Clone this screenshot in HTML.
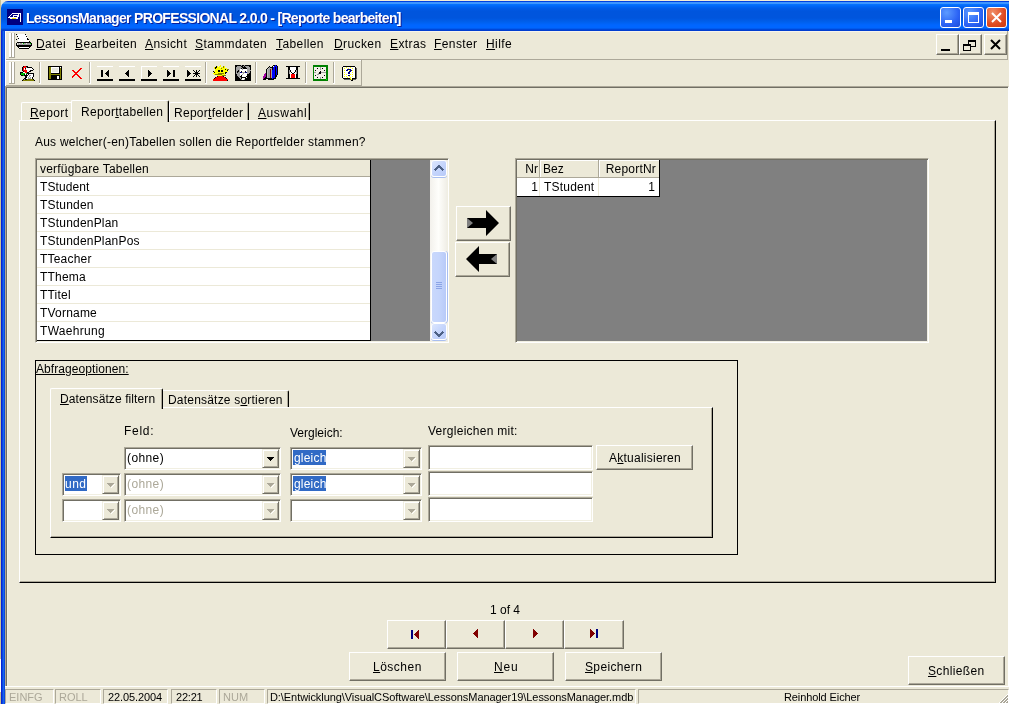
<!DOCTYPE html>
<html><head><meta charset="utf-8">
<style>
*{margin:0;padding:0;box-sizing:border-box}
html,body{width:1009px;height:704px;overflow:hidden;background:#ECE9D8;font-family:"Liberation Sans",sans-serif;font-size:12px;color:#000}
.a{position:absolute}
.t{position:absolute;white-space:pre;line-height:14px}
u{text-decoration:underline;text-underline-offset:1px;text-decoration-thickness:1px}
.btn{position:absolute;background:#ECE9D8;border-top:1px solid #fff;border-left:1px solid #fff;border-right:1px solid #716F64;border-bottom:1px solid #716F64;box-shadow:inset -1px -1px 0 #ACA899}
.sunk{position:absolute;background:#fff;border-top:1px solid #ACA899;border-left:1px solid #ACA899;border-right:1px solid #fff;border-bottom:1px solid #fff;box-shadow:inset 1px 1px 0 #716F64,inset -1px -1px 0 #F1EFE2}
.panel{position:absolute;border-top:1px solid #ACA899;border-left:1px solid #ACA899;border-right:1px solid #fff;border-bottom:1px solid #fff}
</style></head><body>
<div id="root" class="a" style="left:0;top:0;width:1009px;height:704px;overflow:hidden;will-change:transform">

<!-- desktop strip -->
<div class="a" style="left:0;top:0;width:1009px;height:1px;background:#F3EDD6"></div>
<div class="a" style="left:0;top:0;width:1px;height:704px;background:#C8C098"></div><div class="a" style="left:0;top:659px;width:1px;height:33px;background:#fff"></div>

<!-- window frame left blue -->
<div class="a" style="left:1px;top:30px;width:4px;height:674px;background:linear-gradient(90deg,#0019CF,#0831D9 25%,#166AEE 60%,#0836D9)"></div>

<!-- title bar -->
<div class="a" style="left:1px;top:1px;width:1008px;height:30px;border-radius:7px 0 0 0;background:linear-gradient(180deg,#0040E0 0,#0040E0 1px,#3D95FF 1px,#3D95FF 3px,#0875FF 3px,#0068F8 5px,#005CEB 7px,#0055DD 10px,#0055DD 17px,#0060EC 21px,#0066FF 24px,#0066FF 27px,#0052E0 28px,#003DD0 29px,#003DD0 30px)"></div>
<!-- app icon -->
<div id="t1" class="t" style="left:26px;top:11px;font-weight:bold;font-size:14px;letter-spacing:-0.68px;color:#fff;text-shadow:1px 1px 0 #0A1E99">LessonsManager PROFESSIONAL 2.0.0 - [Reporte bearbeiten]</div>

<!-- title buttons -->
<div class="a" style="left:940px;top:7px;width:21px;height:21px;border:1px solid #fff;border-radius:3px;background:radial-gradient(circle at 30% 25%,#5C9BFF,#2B63F5 60%,#1C4DD8)"></div>
<div class="a" style="left:945px;top:20px;width:7px;height:3px;background:#fff"></div>
<div class="a" style="left:963px;top:7px;width:21px;height:21px;border:1px solid #fff;border-radius:3px;background:radial-gradient(circle at 30% 25%,#5C9BFF,#2B63F5 60%,#1C4DD8)"></div>
<div class="a" style="left:968px;top:12px;width:11px;height:11px;border:1px solid #fff;border-top-width:3px"></div>
<div class="a" style="left:986px;top:7px;width:21px;height:21px;border:1px solid #fff;border-radius:3px;background:radial-gradient(circle at 30% 25%,#F0906A,#E04A20 60%,#C83A10)"></div>
<svg class="a" style="left:986px;top:7px" width="21" height="21"><path d="M6 6 L15 15 M15 6 L6 15" stroke="#fff" stroke-width="2"/></svg>

<!-- menubar -->
<div class="a" style="left:5px;top:31px;width:1004px;height:1px;background:#F6F4EC"></div>
<div class="a" style="left:9px;top:33px;width:2px;height:25px;background:#fff"></div>
<div class="a" style="left:11px;top:33px;width:1px;height:25px;background:#ACA899"></div>
<div class="a" style="left:12px;top:33px;width:2px;height:25px;background:#fff"></div>
<div class="a" style="left:14px;top:33px;width:1px;height:25px;background:#ACA899"></div><div class="a" style="left:9px;top:57px;width:6px;height:1px;background:#ACA899"></div>
<div id="t2" class="t" style="left:36px;top:37px;letter-spacing:0.4px"><u>D</u>atei</div><div id="t3" class="t" style="left:75px;top:37px;letter-spacing:0.4px"><u>B</u>earbeiten</div><div id="t4" class="t" style="left:145px;top:37px;letter-spacing:0.4px"><u>A</u>nsicht</div><div id="t5" class="t" style="left:195px;top:37px;letter-spacing:0.4px"><u>S</u>tammdaten</div><div id="t6" class="t" style="left:276px;top:37px;letter-spacing:0.4px"><u>T</u>abellen</div><div id="t7" class="t" style="left:334px;top:37px;letter-spacing:0.4px"><u>D</u>rucken</div><div id="t8" class="t" style="left:390px;top:37px;letter-spacing:0.4px"><u>E</u>xtras</div><div id="t9" class="t" style="left:434px;top:37px;letter-spacing:0.4px"><u>F</u>enster</div><div id="t10" class="t" style="left:486px;top:37px;letter-spacing:0.4px"><u>H</u>ilfe</div>
<div class="a" style="left:5px;top:59px;width:1003px;height:1px;background:#ACA899"></div><div class="a" style="left:1007px;top:31px;width:1px;height:29px;background:#ACA899"></div>
<div class="a" style="left:5px;top:60px;width:356px;height:1px;background:#fff"></div><div class="a" style="left:361px;top:60px;width:1px;height:26px;background:#ACA899"></div>

<!-- mdi buttons -->
<div class="btn" style="left:936px;top:34px;width:23px;height:21px"></div>
<div class="btn" style="left:959px;top:34px;width:23px;height:21px"></div>
<div class="btn" style="left:984px;top:34px;width:23px;height:21px"></div>
<div class="a" style="left:941px;top:49px;width:9px;height:2px;background:#000"></div>
<div class="a" style="left:968px;top:40px;width:8px;height:7px;border:1px solid #000;border-top-width:2px"></div>
<div class="a" style="left:963px;top:44px;width:8px;height:7px;border:1px solid #000;border-top-width:2px;background:#ECE9D8"></div>
<svg class="a" style="left:990px;top:39px" width="11" height="11"><path d="M1 1 L10 10 M10 1 L1 10" stroke="#000" stroke-width="2"/></svg>


<!-- toolbar -->
<div class="a" style="left:9px;top:62px;width:2px;height:22px;background:#fff"></div>
<div class="a" style="left:11px;top:62px;width:1px;height:22px;background:#ACA899"></div>
<div class="a" style="left:12px;top:62px;width:2px;height:22px;background:#fff"></div>
<div class="a" style="left:14px;top:62px;width:1px;height:22px;background:#ACA899"></div><div class="a" style="left:9px;top:83px;width:6px;height:1px;background:#ACA899"></div>
<div class="a" style="left:5px;top:85px;width:357px;height:1px;background:#ACA899"></div>

<!-- MDI client -->
<div class="a" style="left:5px;top:86px;width:1004px;height:600px;border-top:1px solid #ACA899;border-left:1px solid #B0A890;border-right:1px solid #fff;box-shadow:inset 1px 1px 0 #716F64,inset 2px 0 0 #F4F0E2"></div>
<div class="a" style="left:5px;top:31px;width:1px;height:55px;background:#fff"></div>
<div class="a" style="left:5px;top:686px;width:1004px;height:1px;background:#fff"></div>

<!-- tab panel -->
<div class="a" style="left:19px;top:120px;width:977px;height:463px;border-top:1px solid #fff;border-left:1px solid #fff;border-right:1px solid #000;border-bottom:1px solid #000;box-shadow:inset -1px -1px 0 #ACA899"></div>


<!-- main tabs -->
<div class="a" style="left:21px;top:102px;width:50px;height:18px;background:#ECE9D8;border-top:1px solid #fff;border-left:1px solid #fff;border-top-left-radius:2px"></div>
<div class="a" style="left:169px;top:102px;width:80px;height:18px;background:#ECE9D8;border-top:1px solid #fff;border-left:1px solid #fff;border-right:1px solid #000;box-shadow:inset -1px 0 0 #ACA899;border-top-left-radius:2px;border-top-right-radius:2px"></div>
<div class="a" style="left:249px;top:102px;width:61px;height:18px;background:#ECE9D8;border-top:1px solid #fff;border-right:1px solid #000;box-shadow:inset -1px 0 0 #ACA899;border-top-right-radius:2px"></div>
<div class="a" style="left:71px;top:100px;width:98px;height:22px;background:#ECE9D8;border-top:1px solid #fff;border-left:1px solid #fff;border-right:1px solid #000;box-shadow:inset -1px 0 0 #ACA899;border-top-left-radius:2px;border-top-right-radius:2px;z-index:2"></div>
<div id="t11" class="t" style="left:30px;top:106px;letter-spacing:0.4px"><u>R</u>eport</div>
<div id="t12" class="t" style="left:81px;top:105px;z-index:3;letter-spacing:0.3px">Repor<u>t</u>tabellen</div>
<div id="t13" class="t" style="left:174px;top:106px;letter-spacing:0.27px">Repor<u>t</u>felder</div>
<div id="t14" class="t" style="left:258px;top:106px;letter-spacing:0.54px"><u>A</u>uswahl</div>

<div id="t15" class="t" style="left:35px;top:135px;letter-spacing:0.22px">Aus welcher(-en)Tabellen sollen die Reportfelder stammen?</div>

<!-- left grid -->
<div class="a" style="left:35px;top:158px;width:414px;height:185px;background:#808080;border-top:1px solid #ACA899;border-left:1px solid #ACA899;border-right:1px solid #fff;border-bottom:1px solid #fff;box-shadow:inset 1px 1px 0 #716F64,inset -1px -1px 0 #F1EFE2"></div>
<div class="a" style="left:37px;top:160px;width:334px;height:181px;background:#fff;border-right:1px solid #000;border-bottom:1px solid #000"></div>
<div class="a" style="left:37px;top:160px;width:333px;height:17px;background:#ECE9D8;border-bottom:1px solid #ACA899"></div>
<div id="t16" class="t" style="left:40px;top:162px;letter-spacing:0.2px">verfügbare Tabellen</div>
<div class="a" style="left:37px;top:195px;width:333px;height:1px;background:#ECE9D8"></div>
<div id="t17" class="t" style="left:40px;top:180px;letter-spacing:0.1px">TStudent</div>
<div class="a" style="left:37px;top:213px;width:333px;height:1px;background:#ECE9D8"></div>
<div id="t18" class="t" style="left:40px;top:198px;letter-spacing:0.2px">TStunden</div>
<div class="a" style="left:37px;top:231px;width:333px;height:1px;background:#ECE9D8"></div>
<div id="t19" class="t" style="left:40px;top:216px;letter-spacing:0.2px">TStundenPlan</div>
<div class="a" style="left:37px;top:249px;width:333px;height:1px;background:#ECE9D8"></div>
<div id="t20" class="t" style="left:40px;top:234px;letter-spacing:0.2px">TStundenPlanPos</div>
<div class="a" style="left:37px;top:267px;width:333px;height:1px;background:#ECE9D8"></div>
<div id="t21" class="t" style="left:40px;top:252px;letter-spacing:0.2px">TTeacher</div>
<div class="a" style="left:37px;top:285px;width:333px;height:1px;background:#ECE9D8"></div>
<div id="t22" class="t" style="left:40px;top:270px;letter-spacing:0.2px">TThema</div>
<div class="a" style="left:37px;top:303px;width:333px;height:1px;background:#ECE9D8"></div>
<div id="t23" class="t" style="left:40px;top:288px;letter-spacing:0.2px">TTitel</div>
<div class="a" style="left:37px;top:321px;width:333px;height:1px;background:#ECE9D8"></div>
<div id="t24" class="t" style="left:40px;top:306px;letter-spacing:0.2px">TVorname</div>
<div id="t25" class="t" style="left:40px;top:324px;letter-spacing:0.3px">TWaehrung</div>


<!-- scrollbar -->
<div class="a" style="left:430px;top:160px;width:17px;height:181px;background:linear-gradient(90deg,#F3F1EC,#FEFEFB 50%,#F0EEE6)"></div>
<div class="a" style="left:431px;top:160px;width:16px;height:17px;border:1px solid #fff;border-radius:3px;background:linear-gradient(135deg,#DCE6FD,#C5D5FC 50%,#B8CAF8);box-shadow:0 1px 0 #A8BEF0"></div>
<svg class="a" style="left:434px;top:165px" width="10" height="6" shape-rendering="crispEdges"><path fill="#4D6185" d="M4 0h2v1h-2zM3 1h4v1h-4zM2 2h6v1h-6zM1 3h3v1h-3zM6 3h3v1h-3zM0 4h3v1h-3zM7 4h3v1h-3zM1 5h1v1h-1zM8 5h1v1h-1z"/></svg>
<div class="a" style="left:431px;top:251px;width:16px;height:72px;border:1px solid #fff;border-radius:3px;background:linear-gradient(90deg,#C9D8FC,#C5D5FC 50%,#B8CAF8);box-shadow:0 1px 0 #A8BEF0,1px 0 0 #A8BEF0"></div>
<div class="a" style="left:436px;top:282px;width:6px;height:1px;background:#8BA4E6;box-shadow:0 2px 0 #8BA4E6,0 4px 0 #8BA4E6,0 6px 0 #8BA4E6"></div>
<div class="a" style="left:431px;top:323px;width:16px;height:17px;border:1px solid #fff;border-radius:3px;background:linear-gradient(135deg,#DCE6FD,#C5D5FC 50%,#B8CAF8);box-shadow:0 1px 0 #A8BEF0"></div>
<svg class="a" style="left:434px;top:331px" width="10" height="6" shape-rendering="crispEdges"><path fill="#4D6185" d="M1 0h1v1h-1zM8 0h1v1h-1zM0 1h3v1h-3zM7 1h3v1h-3zM1 2h3v1h-3zM6 2h3v1h-3zM2 3h6v1h-6zM3 4h4v1h-4zM4 5h2v1h-2z"/></svg>

<!-- arrow buttons -->
<div class="btn" style="left:456px;top:206px;width:55px;height:35px"></div>
<svg class="a" style="left:456px;top:206px" width="55" height="35"><path d="M11 12 H30 V4 L43 17 L30 30 V22 H11 Z" fill="#000"/><path d="M11 12 L17 17 L11 22 Z" fill="#808080"/></svg>
<div class="btn" style="left:455px;top:242px;width:55px;height:35px"></div>
<svg class="a" style="left:455px;top:242px" width="55" height="35"><path d="M42 12 H24 V4 L11 17 L24 30 V22 H42 Z" fill="#000"/><path d="M42 12 L36 17 L42 22 Z" fill="#808080"/></svg>

<!-- right grid -->
<div class="a" style="left:515px;top:158px;width:414px;height:185px;background:#808080;border-top:1px solid #ACA899;border-left:1px solid #ACA899;border-right:1px solid #fff;border-bottom:1px solid #fff;box-shadow:inset 1px 1px 0 #716F64,inset -1px -1px 0 #F1EFE2"></div>
<div class="a" style="left:517px;top:160px;width:143px;height:37px;background:#fff;border-right:1px solid #000;border-bottom:1px solid #000"></div>
<div class="a" style="left:517px;top:160px;width:142px;height:18px;background:#ECE9D8;border-top:1px solid #fff;border-bottom:1px solid #ACA899"></div>
<div class="a" style="left:539px;top:160px;width:1px;height:17px;background:#ACA899"></div>
<div class="a" style="left:540px;top:160px;width:1px;height:17px;background:#fff"></div>
<div class="a" style="left:598px;top:160px;width:1px;height:17px;background:#ACA899"></div>
<div class="a" style="left:599px;top:160px;width:1px;height:17px;background:#fff"></div>
<div class="a" style="left:539px;top:178px;width:1px;height:18px;background:#ECE9D8"></div>
<div class="a" style="left:598px;top:178px;width:1px;height:18px;background:#ECE9D8"></div>
<div id="t26" class="t" style="left:517px;top:162px;width:21px;text-align:right">Nr</div>
<div id="t27" class="t" style="left:543px;top:162px">Bez</div>
<div id="t28" class="t" style="left:600px;top:162px;width:56px;text-align:right;letter-spacing:0.2px">ReportNr</div>
<div id="t29" class="t" style="left:517px;top:180px;width:21px;text-align:right">1</div>
<div id="t30" class="t" style="left:544px;top:180px;letter-spacing:0.2px">TStudent</div>
<div id="t31" class="t" style="left:600px;top:180px;width:55px;text-align:right">1</div>

<!-- Abfrageoptionen frame -->
<div class="a" style="left:35px;top:360px;width:703px;height:195px;border:1px solid #000"></div>
<div id="t32" class="t" style="left:36px;top:362px;text-decoration:underline;text-underline-offset:1px;letter-spacing:0.08px">Abfrageoptionen:</div>

<!-- inner tabs -->
<div class="a" style="left:50px;top:407px;width:663px;height:131px;border-top:1px solid #fff;border-left:1px solid #fff;border-right:1px solid #000;border-bottom:1px solid #000;box-shadow:inset -1px -1px 0 #ACA899"></div>
<div class="a" style="left:163px;top:390px;width:126px;height:17px;background:#ECE9D8;border-top:1px solid #fff;border-right:1px solid #000;box-shadow:inset -1px 0 0 #ACA899;border-top-right-radius:2px"></div>
<div class="a" style="left:50px;top:388px;width:113px;height:21px;background:#ECE9D8;border-top:1px solid #fff;border-left:1px solid #fff;border-right:1px solid #000;box-shadow:inset -1px 0 0 #ACA899;border-top-left-radius:2px;border-top-right-radius:2px"></div>
<div id="t33" class="t" style="left:60px;top:392px;letter-spacing:0.1px"><u>D</u>atensätze filtern</div>
<div id="t34" class="t" style="left:168px;top:393px;letter-spacing:0.2px">Datensätze s<u>o</u>rtieren</div>

<div id="t35" class="t" style="left:124px;top:424px;letter-spacing:0.7px">Feld:</div>
<div id="t36" class="t" style="left:290px;top:426px">Vergleich:</div>
<div id="t37" class="t" style="left:428px;top:424px;letter-spacing:0.27px">Vergleichen mit:</div>
<div class="sunk" style="left:124px;top:447px;width:157px;height:23px"></div>
<div class="btn" style="left:262px;top:449px;width:17px;height:19px;border-top-color:#F1EFE2;border-left-color:#F1EFE2;box-shadow:inset 1px 1px 0 #fff,inset -1px -1px 0 #ACA899"></div>
<svg class="a" style="left:267px;top:457px" width="7" height="4" shape-rendering="crispEdges"><path fill="#000" d="M0 0h7v1h-7zM1 1h5v1h-5zM2 2h3v1h-3zM3 3h1v1h-1z"/></svg>
<div id="t38" class="t" style="left:127px;top:451px;color:#000;letter-spacing:0.4px">(ohne)</div>
<div class="sunk" style="left:290px;top:447px;width:132px;height:23px"></div>
<div class="btn" style="left:403px;top:449px;width:17px;height:19px;border-top-color:#F1EFE2;border-left-color:#F1EFE2;box-shadow:inset 1px 1px 0 #fff,inset -1px -1px 0 #ACA899"></div>
<svg class="a" style="left:408px;top:457px" width="9" height="5" shape-rendering="crispEdges"><path fill="#ACA899" d="M0 0h7v1h-7zM1 1h5v1h-5zM2 2h3v1h-3zM3 3h1v1h-1z"/><path fill="#fff" d="M7 1h1v1h-1zM6 2h1v1h-1zM5 3h1v1h-1zM4 4h1v1h-1z"/></svg>
<div class="a" style="left:293px;top:450px;width:33px;height:15px;background:#316AC5"></div>
<div id="t39" class="t" style="left:294px;top:451px;color:#fff;letter-spacing:0.2px">gleich</div>
<div class="sunk" style="left:62px;top:473px;width:59px;height:23px"></div>
<div class="btn" style="left:102px;top:475px;width:17px;height:19px;border-top-color:#F1EFE2;border-left-color:#F1EFE2;box-shadow:inset 1px 1px 0 #fff,inset -1px -1px 0 #ACA899"></div>
<svg class="a" style="left:107px;top:483px" width="9" height="5" shape-rendering="crispEdges"><path fill="#ACA899" d="M0 0h7v1h-7zM1 1h5v1h-5zM2 2h3v1h-3zM3 3h1v1h-1z"/><path fill="#fff" d="M7 1h1v1h-1zM6 2h1v1h-1zM5 3h1v1h-1zM4 4h1v1h-1z"/></svg>
<div class="a" style="left:65px;top:476px;width:22px;height:15px;background:#316AC5"></div>
<div id="t40" class="t" style="left:65px;top:477px;color:#fff;letter-spacing:0.5px">und</div>
<div class="sunk" style="left:124px;top:473px;width:157px;height:23px"></div>
<div class="btn" style="left:262px;top:475px;width:17px;height:19px;border-top-color:#F1EFE2;border-left-color:#F1EFE2;box-shadow:inset 1px 1px 0 #fff,inset -1px -1px 0 #ACA899"></div>
<svg class="a" style="left:267px;top:483px" width="9" height="5" shape-rendering="crispEdges"><path fill="#ACA899" d="M0 0h7v1h-7zM1 1h5v1h-5zM2 2h3v1h-3zM3 3h1v1h-1z"/><path fill="#fff" d="M7 1h1v1h-1zM6 2h1v1h-1zM5 3h1v1h-1zM4 4h1v1h-1z"/></svg>
<div id="t41" class="t" style="left:127px;top:477px;color:#ACA899;letter-spacing:0.4px">(ohne)</div>
<div class="sunk" style="left:290px;top:473px;width:132px;height:23px"></div>
<div class="btn" style="left:403px;top:475px;width:17px;height:19px;border-top-color:#F1EFE2;border-left-color:#F1EFE2;box-shadow:inset 1px 1px 0 #fff,inset -1px -1px 0 #ACA899"></div>
<svg class="a" style="left:408px;top:483px" width="9" height="5" shape-rendering="crispEdges"><path fill="#ACA899" d="M0 0h7v1h-7zM1 1h5v1h-5zM2 2h3v1h-3zM3 3h1v1h-1z"/><path fill="#fff" d="M7 1h1v1h-1zM6 2h1v1h-1zM5 3h1v1h-1zM4 4h1v1h-1z"/></svg>
<div class="a" style="left:293px;top:476px;width:33px;height:15px;background:#316AC5"></div>
<div id="t42" class="t" style="left:294px;top:477px;color:#fff;letter-spacing:0.2px">gleich</div>
<div class="sunk" style="left:62px;top:499px;width:59px;height:23px"></div>
<div class="btn" style="left:102px;top:501px;width:17px;height:19px;border-top-color:#F1EFE2;border-left-color:#F1EFE2;box-shadow:inset 1px 1px 0 #fff,inset -1px -1px 0 #ACA899"></div>
<svg class="a" style="left:107px;top:509px" width="9" height="5" shape-rendering="crispEdges"><path fill="#ACA899" d="M0 0h7v1h-7zM1 1h5v1h-5zM2 2h3v1h-3zM3 3h1v1h-1z"/><path fill="#fff" d="M7 1h1v1h-1zM6 2h1v1h-1zM5 3h1v1h-1zM4 4h1v1h-1z"/></svg>
<div class="sunk" style="left:124px;top:499px;width:157px;height:23px"></div>
<div class="btn" style="left:262px;top:501px;width:17px;height:19px;border-top-color:#F1EFE2;border-left-color:#F1EFE2;box-shadow:inset 1px 1px 0 #fff,inset -1px -1px 0 #ACA899"></div>
<svg class="a" style="left:267px;top:509px" width="9" height="5" shape-rendering="crispEdges"><path fill="#ACA899" d="M0 0h7v1h-7zM1 1h5v1h-5zM2 2h3v1h-3zM3 3h1v1h-1z"/><path fill="#fff" d="M7 1h1v1h-1zM6 2h1v1h-1zM5 3h1v1h-1zM4 4h1v1h-1z"/></svg>
<div id="t43" class="t" style="left:127px;top:503px;color:#ACA899;letter-spacing:0.4px">(ohne)</div>
<div class="sunk" style="left:290px;top:499px;width:132px;height:23px"></div>
<div class="btn" style="left:403px;top:501px;width:17px;height:19px;border-top-color:#F1EFE2;border-left-color:#F1EFE2;box-shadow:inset 1px 1px 0 #fff,inset -1px -1px 0 #ACA899"></div>
<svg class="a" style="left:408px;top:509px" width="9" height="5" shape-rendering="crispEdges"><path fill="#ACA899" d="M0 0h7v1h-7zM1 1h5v1h-5zM2 2h3v1h-3zM3 3h1v1h-1z"/><path fill="#fff" d="M7 1h1v1h-1zM6 2h1v1h-1zM5 3h1v1h-1zM4 4h1v1h-1z"/></svg>
<div class="sunk" style="left:428px;top:445px;width:165px;height:25px"></div>
<div class="sunk" style="left:428px;top:471px;width:165px;height:25px"></div>
<div class="sunk" style="left:428px;top:497px;width:165px;height:25px"></div>

<div class="btn" style="left:596px;top:445px;width:97px;height:25px"></div>
<div id="t44" class="t" style="left:609px;top:451px;letter-spacing:0.25px">A<u>k</u>tualisieren</div>

<!-- navigator -->
<div id="t45" class="t" style="left:490px;top:603px">1 of 4</div>
<div class="btn" style="left:387px;top:620px;width:59px;height:29px"></div>
<div class="btn" style="left:446px;top:620px;width:59px;height:29px"></div>
<div class="btn" style="left:505px;top:620px;width:59px;height:29px"></div>
<div class="btn" style="left:564px;top:620px;width:60px;height:29px"></div>
<svg class="a" style="left:411px;top:630px" width="8" height="9" shape-rendering="crispEdges"><path fill="#000080" d="M0 0h2v1h-2zM0 1h2v1h-2zM0 2h2v1h-2zM0 3h2v1h-2zM0 4h2v1h-2zM0 5h2v1h-2zM0 6h2v1h-2zM0 7h2v1h-2zM0 8h2v1h-2z"/><path fill="#800000" d="M7 0h1v1h-1zM6 1h2v1h-2zM5 2h3v1h-3zM4 3h4v1h-4zM3 4h5v1h-5zM4 5h4v1h-4zM5 6h3v1h-3zM6 7h2v1h-2zM7 8h1v1h-1z"/></svg>
<svg class="a" style="left:473px;top:629px" width="5" height="9" shape-rendering="crispEdges"><path fill="#800000" d="M4 0h1v1h-1zM3 1h2v1h-2zM2 2h3v1h-3zM1 3h4v1h-4zM0 4h5v1h-5zM1 5h4v1h-4zM2 6h3v1h-3zM3 7h2v1h-2zM4 8h1v1h-1z"/></svg>
<svg class="a" style="left:533px;top:629px" width="5" height="9" shape-rendering="crispEdges"><path fill="#800000" d="M0 0h1v1h-1zM0 1h2v1h-2zM0 2h3v1h-3zM0 3h4v1h-4zM0 4h5v1h-5zM0 5h4v1h-4zM0 6h3v1h-3zM0 7h2v1h-2zM0 8h1v1h-1z"/></svg>
<svg class="a" style="left:590px;top:629px" width="8" height="9" shape-rendering="crispEdges"><path fill="#800000" d="M0 0h1v1h-1zM0 1h2v1h-2zM0 2h3v1h-3zM0 3h4v1h-4zM0 4h5v1h-5zM0 5h4v1h-4zM0 6h3v1h-3zM0 7h2v1h-2zM0 8h1v1h-1z"/><path fill="#000080" d="M6 0h2v1h-2zM6 1h2v1h-2zM6 2h2v1h-2zM6 3h2v1h-2zM6 4h2v1h-2zM6 5h2v1h-2zM6 6h2v1h-2zM6 7h2v1h-2zM6 8h2v1h-2z"/></svg>
<div class="btn" style="left:349px;top:652px;width:97px;height:29px"></div>
<div id="t46" class="t" style="left:373px;top:660px;letter-spacing:0.5px"><u>L</u>öschen</div>
<div class="btn" style="left:457px;top:652px;width:97px;height:29px"></div>
<div id="t47" class="t" style="left:494px;top:660px;letter-spacing:0.8px"><u>N</u>eu</div>
<div class="btn" style="left:565px;top:652px;width:97px;height:29px"></div>
<div id="t48" class="t" style="left:585px;top:660px;letter-spacing:0.35px"><u>S</u>peichern</div>
<div class="btn" style="left:908px;top:656px;width:97px;height:29px"></div>
<div id="t49" class="t" style="left:928px;top:664px;letter-spacing:0.35px"><u>S</u>chließen</div>

<!-- status bar -->
<div class="a" style="left:5px;top:689px;width:1004px;height:15px;background:#ECE9D8"></div>
<div class="panel" style="left:5px;top:689px;width:49px;height:15px"></div>
<div id="t50" class="t" style="left:9px;top:690px;font-size:11px;color:#ACA899">EINFG</div>
<div class="panel" style="left:55px;top:689px;width:46px;height:15px"></div>
<div id="t51" class="t" style="left:59px;top:690px;font-size:11px;color:#ACA899">ROLL</div>
<div class="panel" style="left:103px;top:689px;width:65px;height:15px"></div>
<div id="t52" class="t" style="left:108px;top:690px;font-size:11px;letter-spacing:-0.1px">22.05.2004</div>
<div class="panel" style="left:171px;top:689px;width:46px;height:15px"></div>
<div id="t53" class="t" style="left:176px;top:690px;font-size:11px;letter-spacing:-0.2px">22:21</div>
<div class="panel" style="left:219px;top:689px;width:46px;height:15px"></div>
<div id="t54" class="t" style="left:223px;top:690px;font-size:11px;color:#ACA899">NUM</div>
<div class="panel" style="left:267px;top:689px;width:369px;height:15px"></div>
<div id="t55" class="t" style="left:270px;top:690px;font-size:11px;letter-spacing:-0.07px">D:\Entwicklung\VisualCSoftware\LessonsManager19\LessonsManager.mdb</div>
<div class="panel" style="left:638px;top:689px;width:371px;height:15px;border-bottom-color:#fff"></div>
<div id="t56" class="t" style="left:784px;top:690px;font-size:11px;letter-spacing:-0.1px">Reinhold Eicher</div>
<!--ICONS-->
<svg class="a" style="left:7px;top:9px" width="16" height="16" shape-rendering="crispEdges"><path fill="#000080" d="M0 0h16v1h-16zM0 1h16v1h-16zM0 2h16v1h-16zM0 3h16v1h-16zM0 4h5v1h-5zM14 4h2v1h-2zM0 5h4v1h-4zM5 5h6v1h-6zM12 5h1v1h-1zM14 5h2v1h-2zM0 6h3v1h-3zM4 6h2v1h-2zM12 6h1v1h-1zM14 6h2v1h-2zM0 7h2v1h-2zM3 7h3v1h-3zM7 7h3v1h-3zM12 7h1v1h-1zM14 7h2v1h-2zM0 8h1v1h-1zM11 8h2v1h-2zM14 8h2v1h-2zM0 9h3v1h-3zM11 9h2v1h-2zM14 9h2v1h-2zM0 10h13v1h-13zM14 10h2v1h-2zM0 11h13v1h-13zM14 11h2v1h-2zM0 12h13v1h-13zM14 12h2v1h-2zM0 13h16v1h-16zM0 14h16v1h-16zM0 15h16v1h-16z"/><path fill="#fff" d="M5 4h9v1h-9zM4 5h1v1h-1zM11 5h1v1h-1zM13 5h1v1h-1zM3 6h1v1h-1zM6 6h6v1h-6zM13 6h1v1h-1zM2 7h1v1h-1zM6 7h1v1h-1zM10 7h2v1h-2zM13 7h1v1h-1zM1 8h10v1h-10zM13 8h1v1h-1zM3 9h2v1h-2zM9 9h2v1h-2zM13 9h1v1h-1zM13 10h1v1h-1zM13 11h1v1h-1zM13 12h1v1h-1z"/><path fill="#f0e000" d="M5 9h4v1h-4z"/></svg>
<svg class="a" style="left:16px;top:33px" width="16" height="16" shape-rendering="crispEdges"><path fill="#000" d="M0 1h1v1h-1zM9 1h1v1h-1zM1 3h1v1h-1zM10 3h1v1h-1zM2 5h1v1h-1zM11 5h1v1h-1zM0 6h1v1h-1zM11 6h2v1h-2zM13 8h1v1h-1zM1 9h14v1h-14zM0 10h1v1h-1zM15 10h1v1h-1zM0 11h1v1h-1zM15 11h1v1h-1zM0 12h16v1h-16zM1 13h14v1h-14zM2 14h1v1h-1zM13 14h1v1h-1zM3 15h10v1h-10z"/><path fill="#fff" d="M2 1h7v1h-7zM1 2h10v1h-10zM2 3h8v1h-8zM2 4h10v1h-10zM3 5h8v1h-8zM2 6h9v1h-9zM2 7h11v1h-11zM2 8h11v1h-11zM3 14h10v1h-10z"/><path fill="#e8e8e0" d="M1 10h1v1h-1zM3 10h1v1h-1zM6 10h1v1h-1zM10 10h1v1h-1zM1 11h1v1h-1z"/><path fill="#a0a0a0" d="M2 10h1v1h-1zM4 10h2v1h-2zM8 10h2v1h-2zM11 10h3v1h-3zM2 11h13v1h-13z"/><path fill="#00c000" d="M7 10h1v1h-1zM14 10h1v1h-1z"/></svg>
<svg class="a" style="left:20px;top:66px" width="16" height="16" shape-rendering="crispEdges"><path fill="#000" d="M3 0h1v1h-1zM6 0h2v1h-2zM2 1h1v1h-1zM7 1h5v1h-5zM2 2h1v1h-1zM5 2h1v1h-1zM12 2h1v1h-1zM2 3h1v1h-1zM13 3h1v1h-1zM2 4h1v1h-1zM10 4h3v1h-3zM3 5h1v1h-1zM9 5h2v1h-2zM0 6h3v1h-3zM7 6h2v1h-2zM0 7h1v1h-1zM7 7h7v1h-7zM0 8h1v1h-1zM4 8h1v1h-1zM6 8h1v1h-1zM8 8h1v1h-1zM13 8h1v1h-1zM1 9h2v1h-2zM4 9h4v1h-4zM13 9h1v1h-1zM5 10h2v1h-2zM13 10h1v1h-1zM5 11h2v1h-2zM12 11h1v1h-1zM4 12h2v1h-2zM12 12h1v1h-1zM3 13h1v1h-1zM5 13h2v1h-2zM13 13h1v1h-1zM2 14h1v1h-1zM14 14h1v1h-1z"/><path fill="#f00" d="M4 0h2v1h-2zM3 1h3v1h-3zM3 2h1v1h-1zM3 3h1v1h-1zM5 3h1v1h-1zM3 4h4v1h-4zM4 5h3v1h-3zM5 6h2v1h-2z"/><path fill="#a0a0a0" d="M6 1h1v1h-1zM9 9h2v1h-2zM9 10h1v1h-1zM8 11h1v1h-1zM10 11h1v1h-1zM8 12h3v1h-3zM4 13h1v1h-1z"/><path fill="#fff" d="M4 2h1v1h-1zM6 2h6v1h-6zM4 3h1v1h-1zM6 3h7v1h-7zM7 4h3v1h-3zM7 5h2v1h-2zM3 6h2v1h-2zM5 7h1v1h-1zM5 8h1v1h-1zM7 8h1v1h-1zM9 8h4v1h-4zM8 9h1v1h-1zM11 9h2v1h-2zM7 10h2v1h-2zM10 10h3v1h-3zM7 11h1v1h-1zM9 11h1v1h-1zM11 11h1v1h-1zM6 12h2v1h-2zM11 12h1v1h-1z"/><path fill="#00c000" d="M1 7h4v1h-4zM6 7h1v1h-1zM1 8h3v1h-3zM3 9h1v1h-1z"/><path fill="#808000" d="M7 13h6v1h-6zM3 14h11v1h-11z"/></svg>
<svg class="a" style="left:48px;top:66px" width="14" height="14" shape-rendering="crispEdges"><path fill="#000" d="M0 0h14v1h-14zM0 1h1v1h-1zM11 1h1v1h-1zM13 1h1v1h-1zM0 2h1v1h-1zM11 2h1v1h-1zM13 2h1v1h-1zM0 3h1v1h-1zM11 3h1v1h-1zM13 3h1v1h-1zM0 4h1v1h-1zM11 4h1v1h-1zM13 4h1v1h-1zM0 5h1v1h-1zM11 5h1v1h-1zM13 5h1v1h-1zM0 6h1v1h-1zM11 6h1v1h-1zM13 6h1v1h-1zM0 7h1v1h-1zM3 7h9v1h-9zM13 7h1v1h-1zM0 8h1v1h-1zM13 8h1v1h-1zM0 9h1v1h-1zM3 9h9v1h-9zM13 9h1v1h-1zM0 10h1v1h-1zM3 10h6v1h-6zM11 10h1v1h-1zM13 10h1v1h-1zM0 11h1v1h-1zM3 11h6v1h-6zM11 11h1v1h-1zM13 11h1v1h-1zM0 12h1v1h-1zM3 12h6v1h-6zM11 12h1v1h-1zM13 12h1v1h-1zM0 13h14v1h-14z"/><path fill="#808000" d="M1 1h2v1h-2zM1 2h2v1h-2zM12 2h1v1h-1zM1 3h2v1h-2zM12 3h1v1h-1zM1 4h2v1h-2zM12 4h1v1h-1zM1 5h2v1h-2zM12 5h1v1h-1zM1 6h2v1h-2zM12 6h1v1h-1zM1 7h2v1h-2zM12 7h1v1h-1zM1 8h12v1h-12zM1 9h2v1h-2zM12 9h1v1h-1zM1 10h2v1h-2zM12 10h1v1h-1zM1 11h2v1h-2zM12 11h1v1h-1zM1 12h2v1h-2zM12 12h1v1h-1z"/><path fill="#fff" d="M3 1h8v1h-8zM12 1h1v1h-1zM3 2h1v1h-1zM10 2h1v1h-1zM3 3h1v1h-1zM10 3h1v1h-1zM3 4h1v1h-1zM10 4h1v1h-1zM3 5h1v1h-1zM10 5h1v1h-1zM3 6h8v1h-8zM9 10h2v1h-2zM9 11h2v1h-2zM9 12h2v1h-2z"/><path fill="#e8e8e0" d="M4 2h6v1h-6zM4 3h6v1h-6zM4 4h6v1h-6zM4 5h6v1h-6z"/></svg>
<svg class="a" style="left:72px;top:68px" width="10" height="11" shape-rendering="crispEdges"><path fill="#f00" d="M8 0h2v1h-2zM7 1h2v1h-2zM0 2h2v1h-2zM6 2h2v1h-2zM1 3h2v1h-2zM5 3h2v1h-2zM2 4h4v1h-4zM3 5h2v1h-2zM2 6h4v1h-4zM1 7h2v1h-2zM5 7h2v1h-2zM0 8h2v1h-2zM6 8h2v1h-2zM0 9h1v1h-1zM7 9h2v1h-2zM8 10h2v1h-2z"/></svg>
<svg class="a" style="left:213px;top:65px" width="16" height="16" shape-rendering="crispEdges"><path fill="#ffff00" d="M7 0h1v1h-1zM4 1h1v1h-1zM6 1h2v1h-2zM11 1h1v1h-1zM1 2h1v1h-1zM4 2h3v1h-3zM8 2h2v1h-2zM11 2h1v1h-1zM1 3h1v1h-1zM3 3h5v1h-5zM9 3h5v1h-5zM2 4h10v1h-10zM13 4h1v1h-1zM2 5h3v1h-3zM7 5h1v1h-1zM10 5h4v1h-4zM1 6h4v1h-4zM7 6h1v1h-1zM10 6h5v1h-5zM2 7h10v1h-10zM0 8h5v1h-5zM11 8h1v1h-1zM1 9h1v1h-1zM9 9h3v1h-3zM4 10h5v1h-5z"/><path fill="#000" d="M3 1h1v1h-1zM2 2h2v1h-2zM2 3h1v1h-1zM12 4h1v1h-1zM5 5h2v1h-2zM8 5h2v1h-2zM14 5h1v1h-1zM0 6h1v1h-1zM5 6h2v1h-2zM8 6h2v1h-2zM1 7h1v1h-1zM12 7h2v1h-2zM12 8h1v1h-1zM4 11h1v1h-1zM10 11h1v1h-1zM2 12h1v1h-1zM12 12h1v1h-1zM1 13h1v1h-1zM13 13h1v1h-1zM14 15h1v1h-1z"/><path fill="#808000" d="M10 1h1v1h-1zM10 2h1v1h-1zM8 3h1v1h-1zM14 4h2v1h-2zM5 8h6v1h-6zM2 9h7v1h-7zM9 10h4v1h-4z"/><path fill="#f00" d="M5 11h5v1h-5zM3 12h9v1h-9zM2 13h11v1h-11zM0 14h15v1h-15zM0 15h14v1h-14z"/></svg>
<svg class="a" style="left:235px;top:65px" width="16" height="16" shape-rendering="crispEdges"><path fill="#000" d="M0 0h6v1h-6zM7 0h2v1h-2zM10 0h6v1h-6zM0 1h2v1h-2zM6 1h2v1h-2zM9 1h1v1h-1zM14 1h2v1h-2zM0 2h1v1h-1zM7 2h4v1h-4zM15 2h1v1h-1zM0 3h1v1h-1zM6 3h1v1h-1zM8 3h4v1h-4zM15 3h1v1h-1zM0 4h1v1h-1zM15 4h1v1h-1zM0 5h1v1h-1zM3 5h1v1h-1zM0 6h1v1h-1zM2 6h2v1h-2zM6 6h1v1h-1zM10 6h1v1h-1zM15 6h1v1h-1zM0 7h1v1h-1zM2 7h1v1h-1zM15 7h1v1h-1zM0 8h1v1h-1zM14 8h2v1h-2zM0 9h2v1h-2zM12 9h4v1h-4zM0 10h2v1h-2zM6 10h1v1h-1zM12 10h4v1h-4zM0 11h3v1h-3zM5 11h2v1h-2zM11 11h5v1h-5zM0 12h4v1h-4zM6 12h5v1h-5zM12 12h4v1h-4zM0 13h5v1h-5zM6 13h1v1h-1zM10 13h6v1h-6zM0 14h6v1h-6zM10 14h6v1h-6zM0 15h16v1h-16z"/><path fill="#a0a0a0" d="M6 0h1v1h-1zM9 0h1v1h-1zM2 1h4v1h-4zM8 1h1v1h-1zM10 1h4v1h-4zM1 2h6v1h-6zM11 2h4v1h-4zM1 3h5v1h-5zM7 3h1v1h-1zM12 3h3v1h-3zM1 4h4v1h-4zM7 4h1v1h-1zM12 4h3v1h-3zM1 5h2v1h-2zM4 5h1v1h-1zM12 5h4v1h-4zM1 6h1v1h-1zM4 6h1v1h-1zM12 6h3v1h-3zM1 7h1v1h-1zM3 7h2v1h-2zM7 7h3v1h-3zM12 7h3v1h-3zM1 8h4v1h-4zM8 8h1v1h-1zM12 8h2v1h-2zM2 9h3v1h-3zM7 9h1v1h-1zM2 10h3v1h-3zM3 11h2v1h-2zM4 12h2v1h-2zM5 13h1v1h-1zM6 14h1v1h-1zM9 14h1v1h-1z"/><path fill="#fff" d="M5 4h2v1h-2zM8 4h4v1h-4zM5 5h7v1h-7zM5 6h1v1h-1zM7 6h3v1h-3zM11 6h1v1h-1zM5 8h3v1h-3zM9 8h3v1h-3zM5 9h2v1h-2zM8 9h4v1h-4zM5 10h1v1h-1zM7 10h5v1h-5zM7 11h4v1h-4zM11 12h1v1h-1zM7 13h3v1h-3zM7 14h2v1h-2z"/><path fill="#000080" d="M5 7h2v1h-2zM10 7h2v1h-2z"/></svg>
<svg class="a" style="left:263px;top:65px" width="15" height="15" shape-rendering="crispEdges"><path fill="#000" d="M10 0h2v1h-2zM13 0h1v1h-1zM6 1h1v1h-1zM9 1h1v1h-1zM14 1h1v1h-1zM5 2h1v1h-1zM7 2h3v1h-3zM12 2h1v1h-1zM14 2h1v1h-1zM4 3h1v1h-1zM9 3h1v1h-1zM12 3h1v1h-1zM14 3h1v1h-1zM3 4h1v1h-1zM9 4h1v1h-1zM12 4h1v1h-1zM14 4h1v1h-1zM3 5h1v1h-1zM12 5h1v1h-1zM14 5h1v1h-1zM3 6h1v1h-1zM12 6h1v1h-1zM14 6h1v1h-1zM3 7h1v1h-1zM12 7h1v1h-1zM14 7h1v1h-1zM3 8h1v1h-1zM12 8h1v1h-1zM14 8h1v1h-1zM3 9h1v1h-1zM12 9h1v1h-1zM14 9h1v1h-1zM3 10h1v1h-1zM12 10h2v1h-2zM3 11h1v1h-1zM12 11h2v1h-2zM2 12h2v1h-2zM12 12h1v1h-1zM1 13h8v1h-8zM10 13h3v1h-3zM0 14h3v1h-3zM5 14h6v1h-6z"/><path fill="#0000ff" d="M12 0h1v1h-1zM11 1h3v1h-3zM10 2h2v1h-2zM13 2h1v1h-1zM10 3h2v1h-2zM13 3h1v1h-1zM10 4h2v1h-2zM13 4h1v1h-1zM9 5h3v1h-3zM13 5h1v1h-1zM9 6h3v1h-3zM13 6h1v1h-1zM9 7h3v1h-3zM13 7h1v1h-1zM9 8h3v1h-3zM13 8h1v1h-1zM9 9h3v1h-3zM13 9h1v1h-1zM9 10h3v1h-3zM9 11h3v1h-3zM9 12h3v1h-3zM9 13h1v1h-1z"/><path fill="#fff" d="M10 1h1v1h-1z"/><path fill="#a0a0a0" d="M6 2h1v1h-1zM6 3h3v1h-3zM5 4h2v1h-2zM8 4h1v1h-1zM5 5h2v1h-2zM8 5h1v1h-1zM5 6h2v1h-2zM8 6h1v1h-1zM5 7h2v1h-2zM8 7h1v1h-1zM5 8h2v1h-2zM8 8h1v1h-1zM5 9h2v1h-2zM8 9h1v1h-1zM5 10h2v1h-2zM8 10h1v1h-1zM5 11h2v1h-2zM8 11h1v1h-1zM5 12h2v1h-2zM8 12h1v1h-1z"/><path fill="#c0c0c0" d="M5 3h1v1h-1zM4 4h1v1h-1zM4 5h1v1h-1zM4 6h1v1h-1zM4 7h1v1h-1zM4 8h1v1h-1zM4 9h1v1h-1zM4 10h1v1h-1zM4 11h1v1h-1zM4 12h1v1h-1z"/><path fill="#800000" d="M7 4h1v1h-1zM7 5h1v1h-1zM7 6h1v1h-1zM7 7h1v1h-1zM7 8h1v1h-1zM7 9h1v1h-1zM7 10h1v1h-1zM7 11h1v1h-1zM7 12h1v1h-1z"/><path fill="#a000a0" d="M2 8h1v1h-1zM1 9h2v1h-2zM1 10h2v1h-2zM0 11h3v1h-3zM0 12h2v1h-2zM0 13h1v1h-1z"/></svg>
<svg class="a" style="left:286px;top:66px" width="14" height="13" shape-rendering="crispEdges"><path fill="#000" d="M0 0h14v1h-14zM2 1h2v1h-2zM10 1h2v1h-2zM2 2h2v1h-2zM10 2h2v1h-2zM2 3h2v1h-2zM10 3h2v1h-2zM2 4h1v1h-1zM4 4h1v1h-1zM9 4h1v1h-1zM11 4h1v1h-1zM2 5h1v1h-1zM4 5h1v1h-1zM9 5h1v1h-1zM11 5h1v1h-1zM2 6h1v1h-1zM5 6h1v1h-1zM8 6h1v1h-1zM11 6h1v1h-1zM2 7h1v1h-1zM6 7h2v1h-2zM11 7h1v1h-1zM2 8h2v1h-2zM10 8h2v1h-2zM2 9h2v1h-2zM10 9h2v1h-2zM2 10h2v1h-2zM10 10h2v1h-2zM2 11h2v1h-2zM10 11h2v1h-2zM0 12h14v1h-14z"/><path fill="#fff" d="M4 1h6v1h-6zM4 2h6v1h-6zM4 3h6v1h-6zM5 4h4v1h-4zM5 5h4v1h-4zM4 6h1v1h-1zM6 6h2v1h-2zM9 6h1v1h-1zM4 7h2v1h-2zM8 7h2v1h-2zM4 8h1v1h-1zM9 8h1v1h-1zM4 9h1v1h-1zM9 9h1v1h-1zM4 10h1v1h-1zM9 10h1v1h-1zM4 11h1v1h-1zM9 11h1v1h-1z"/><path fill="#a0a0a0" d="M3 4h1v1h-1zM10 4h1v1h-1zM3 5h1v1h-1zM10 5h1v1h-1zM3 6h1v1h-1zM10 6h1v1h-1zM3 7h1v1h-1zM10 7h1v1h-1z"/><path fill="#f00" d="M5 8h4v1h-4zM5 9h4v1h-4zM5 10h4v1h-4zM5 11h4v1h-4z"/></svg>
<svg class="a" style="left:313px;top:65px" width="15" height="16" shape-rendering="crispEdges"><path fill="#008000" d="M0 0h15v1h-15zM0 1h15v1h-15zM0 2h1v1h-1zM13 2h2v1h-2zM0 3h1v1h-1zM13 3h2v1h-2zM0 4h1v1h-1zM13 4h2v1h-2zM0 5h1v1h-1zM13 5h2v1h-2zM0 6h1v1h-1zM13 6h2v1h-2zM0 7h1v1h-1zM13 7h2v1h-2zM0 8h1v1h-1zM13 8h2v1h-2zM0 9h1v1h-1zM13 9h2v1h-2zM0 10h1v1h-1zM13 10h2v1h-2zM0 11h1v1h-1zM13 11h2v1h-2zM0 12h1v1h-1zM13 12h2v1h-2zM0 13h1v1h-1zM13 13h2v1h-2zM0 14h13v1h-13zM14 14h1v1h-1zM0 15h15v1h-15z"/><path fill="#f4f0e8" d="M1 2h6v1h-6zM8 2h5v1h-5zM1 3h3v1h-3zM5 3h2v1h-2zM8 3h1v1h-1zM10 3h3v1h-3zM1 4h6v1h-6zM8 4h5v1h-5zM1 5h1v1h-1zM3 5h8v1h-8zM12 5h1v1h-1zM1 6h6v1h-6zM8 6h5v1h-5zM3 7h3v1h-3zM1 8h4v1h-4zM8 8h5v1h-5zM1 9h3v1h-3zM6 9h7v1h-7zM1 10h1v1h-1zM3 10h8v1h-8zM12 10h1v1h-1zM1 11h12v1h-12zM1 12h3v1h-3zM5 12h2v1h-2zM8 12h1v1h-1zM10 12h3v1h-3zM1 13h6v1h-6zM8 13h5v1h-5z"/><path fill="#a0a0a0" d="M7 2h1v1h-1zM7 3h1v1h-1zM7 4h1v1h-1zM1 7h2v1h-2zM8 7h5v1h-5zM5 8h1v1h-1zM4 9h2v1h-2zM7 12h1v1h-1zM7 13h1v1h-1z"/><path fill="#000" d="M4 3h1v1h-1zM9 3h1v1h-1zM2 5h1v1h-1zM11 5h1v1h-1zM7 6h1v1h-1zM6 7h2v1h-2zM6 8h2v1h-2zM2 10h1v1h-1zM11 10h1v1h-1zM4 12h1v1h-1zM9 12h1v1h-1z"/><path fill="#00ff00" d="M13 14h1v1h-1z"/></svg>
<svg class="a" style="left:341px;top:65px" width="16" height="16" shape-rendering="crispEdges"><path fill="#000" d="M2 1h12v1h-12zM1 2h1v1h-1zM14 2h1v1h-1zM1 3h1v1h-1zM14 3h1v1h-1zM1 4h1v1h-1zM14 4h1v1h-1zM1 5h1v1h-1zM14 5h1v1h-1zM1 6h1v1h-1zM14 6h1v1h-1zM1 7h1v1h-1zM14 7h1v1h-1zM1 8h1v1h-1zM14 8h1v1h-1zM1 9h1v1h-1zM14 9h1v1h-1zM1 10h1v1h-1zM14 10h1v1h-1zM1 11h1v1h-1zM14 11h1v1h-1zM1 12h1v1h-1zM14 12h1v1h-1zM2 13h7v1h-7zM11 13h4v1h-4zM11 14h1v1h-1zM10 15h2v1h-2z"/><path fill="#fff" d="M2 2h3v1h-3zM6 2h3v1h-3zM10 2h4v1h-4zM2 3h1v1h-1zM4 3h3v1h-3zM8 3h3v1h-3zM12 3h2v1h-2zM2 4h4v1h-4zM10 4h4v1h-4zM2 5h1v1h-1zM4 5h1v1h-1zM7 5h1v1h-1zM12 5h2v1h-2zM2 6h6v1h-6zM10 6h4v1h-4zM2 7h1v1h-1zM4 7h3v1h-3zM9 7h2v1h-2zM12 7h2v1h-2zM2 8h5v1h-5zM9 8h5v1h-5zM2 9h1v1h-1zM4 9h1v1h-1zM6 9h3v1h-3zM10 9h1v1h-1zM12 9h2v1h-2zM2 10h5v1h-5zM9 10h5v1h-5zM2 11h1v1h-1zM4 11h1v1h-1zM6 11h2v1h-2zM9 11h2v1h-2zM12 11h2v1h-2zM2 12h4v1h-4zM7 12h2v1h-2zM10 12h4v1h-4zM10 13h1v1h-1z"/><path fill="#ffff00" d="M5 2h1v1h-1zM9 2h1v1h-1zM3 3h1v1h-1zM7 3h1v1h-1zM11 3h1v1h-1zM3 5h1v1h-1zM8 5h1v1h-1zM11 5h1v1h-1zM3 7h1v1h-1zM11 7h1v1h-1zM3 9h1v1h-1zM5 9h1v1h-1zM9 9h1v1h-1zM11 9h1v1h-1zM3 11h1v1h-1zM5 11h1v1h-1zM8 11h1v1h-1zM11 11h1v1h-1zM6 12h1v1h-1zM9 12h1v1h-1zM9 13h1v1h-1zM10 14h1v1h-1z"/><path fill="#606060" d="M15 3h1v1h-1zM15 4h1v1h-1zM15 5h1v1h-1zM15 6h1v1h-1zM15 7h1v1h-1zM15 8h1v1h-1zM15 9h1v1h-1zM15 10h1v1h-1zM15 11h1v1h-1zM15 12h1v1h-1zM15 13h1v1h-1zM3 14h7v1h-7zM12 14h3v1h-3z"/><path fill="#000080" d="M6 4h4v1h-4zM5 5h2v1h-2zM9 5h2v1h-2zM8 6h2v1h-2zM7 7h2v1h-2zM7 8h2v1h-2zM7 10h2v1h-2z"/></svg>
<div class="a" style="left:97px;top:66px;width:16px;height:1px;background:#fff"></div><div class="a" style="left:97px;top:79px;width:16px;height:2px;background:#000"></div><div class="a" style="left:119px;top:66px;width:16px;height:1px;background:#fff"></div><div class="a" style="left:119px;top:79px;width:16px;height:2px;background:#000"></div><div class="a" style="left:141px;top:66px;width:16px;height:1px;background:#fff"></div><div class="a" style="left:141px;top:79px;width:16px;height:2px;background:#000"></div><div class="a" style="left:163px;top:66px;width:16px;height:1px;background:#fff"></div><div class="a" style="left:163px;top:79px;width:16px;height:2px;background:#000"></div><div class="a" style="left:185px;top:66px;width:16px;height:1px;background:#fff"></div><div class="a" style="left:185px;top:79px;width:16px;height:2px;background:#000"></div><div class="a" style="left:141px;top:66px;width:1px;height:13px;background:#fff"></div>
<svg class="a" style="left:101px;top:70px" width="8" height="7" shape-rendering="crispEdges"><path fill="#000" d="M0 0h2v1h-2zM7 0h1v1h-1zM0 1h2v1h-2zM6 1h2v1h-2zM0 2h2v1h-2zM5 2h3v1h-3zM0 3h2v1h-2zM4 3h4v1h-4zM0 4h2v1h-2zM5 4h3v1h-3zM0 5h2v1h-2zM6 5h2v1h-2zM0 6h2v1h-2zM7 6h1v1h-1z"/></svg>
<svg class="a" style="left:125px;top:70px" width="4" height="7" shape-rendering="crispEdges"><path fill="#000" d="M3 0h1v1h-1zM2 1h2v1h-2zM1 2h3v1h-3zM0 3h4v1h-4zM1 4h3v1h-3zM2 5h2v1h-2zM3 6h1v1h-1z"/></svg>
<svg class="a" style="left:148px;top:70px" width="4" height="7" shape-rendering="crispEdges"><path fill="#000" d="M0 0h1v1h-1zM0 1h2v1h-2zM0 2h3v1h-3zM0 3h4v1h-4zM0 4h3v1h-3zM0 5h2v1h-2zM0 6h1v1h-1z"/></svg>
<svg class="a" style="left:167px;top:70px" width="8" height="7" shape-rendering="crispEdges"><path fill="#000" d="M0 0h1v1h-1zM6 0h2v1h-2zM0 1h2v1h-2zM6 1h2v1h-2zM0 2h3v1h-3zM6 2h2v1h-2zM0 3h4v1h-4zM6 3h2v1h-2zM0 4h3v1h-3zM6 4h2v1h-2zM0 5h2v1h-2zM6 5h2v1h-2zM0 6h1v1h-1zM6 6h2v1h-2z"/></svg>
<svg class="a" style="left:187px;top:70px" width="13" height="7" shape-rendering="crispEdges"><path fill="#000" d="M0 0h1v1h-1zM6 0h1v1h-1zM9 0h1v1h-1zM12 0h1v1h-1zM0 1h2v1h-2zM7 1h1v1h-1zM9 1h1v1h-1zM11 1h1v1h-1zM0 2h3v1h-3zM8 2h3v1h-3zM0 3h4v1h-4zM6 3h7v1h-7zM0 4h3v1h-3zM8 4h3v1h-3zM0 5h2v1h-2zM7 5h1v1h-1zM9 5h1v1h-1zM11 5h1v1h-1zM0 6h1v1h-1zM6 6h1v1h-1zM9 6h1v1h-1zM12 6h1v1h-1z"/></svg>
<div class="a" style="left:39px;top:62px;width:1px;height:21px;background:#ACA899"></div><div class="a" style="left:40px;top:62px;width:1px;height:22px;background:#fff"></div><div class="a" style="left:39px;top:83px;width:1px;height:1px;background:#fff"></div>
<div class="a" style="left:89px;top:62px;width:1px;height:21px;background:#ACA899"></div><div class="a" style="left:90px;top:62px;width:1px;height:22px;background:#fff"></div><div class="a" style="left:89px;top:83px;width:1px;height:1px;background:#fff"></div>
<div class="a" style="left:205px;top:62px;width:1px;height:21px;background:#ACA899"></div><div class="a" style="left:206px;top:62px;width:1px;height:22px;background:#fff"></div><div class="a" style="left:205px;top:83px;width:1px;height:1px;background:#fff"></div>
<div class="a" style="left:255px;top:62px;width:1px;height:21px;background:#ACA899"></div><div class="a" style="left:256px;top:62px;width:1px;height:22px;background:#fff"></div><div class="a" style="left:255px;top:83px;width:1px;height:1px;background:#fff"></div>
<div class="a" style="left:305px;top:62px;width:1px;height:21px;background:#ACA899"></div><div class="a" style="left:306px;top:62px;width:1px;height:22px;background:#fff"></div><div class="a" style="left:305px;top:83px;width:1px;height:1px;background:#fff"></div>
<div class="a" style="left:333px;top:62px;width:1px;height:21px;background:#ACA899"></div><div class="a" style="left:334px;top:62px;width:1px;height:22px;background:#fff"></div><div class="a" style="left:333px;top:83px;width:1px;height:1px;background:#fff"></div>
<!--/ICONS-->
<!--grip--><svg class="a" style="left:998px;top:694px" width="10" height="9" shape-rendering="crispEdges"><path fill="#fff" d="M9 0h1v1h-1zM8 1h1v1h-1zM7 2h1v1h-1zM6 3h1v1h-1zM9 3h1v1h-1zM5 4h1v1h-1zM8 4h1v1h-1zM4 5h1v1h-1zM7 5h1v1h-1zM3 6h1v1h-1zM6 6h1v1h-1zM9 6h1v1h-1zM2 7h1v1h-1zM5 7h1v1h-1zM8 7h1v1h-1zM1 8h1v1h-1zM4 8h1v1h-1zM7 8h1v1h-1z"/><path fill="#ACA899" d="M9 1h1v1h-1zM8 2h2v1h-2zM7 3h2v1h-2zM6 4h2v1h-2zM9 4h1v1h-1zM5 5h2v1h-2zM8 5h2v1h-2zM4 6h2v1h-2zM7 6h2v1h-2zM3 7h2v1h-2zM6 7h2v1h-2zM9 7h1v1h-1zM2 8h2v1h-2zM5 8h2v1h-2zM8 8h2v1h-2z"/></svg>
<div id="statusbar"></div>
</div>
</body></html>
